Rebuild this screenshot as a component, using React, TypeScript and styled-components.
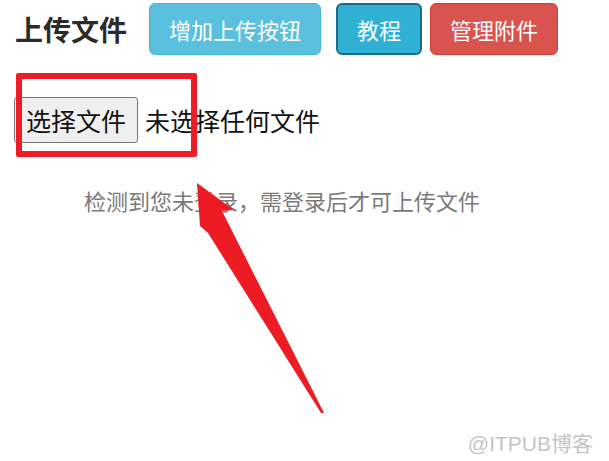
import styled, { createGlobalStyle } from "styled-components";

const GlobalStyle = createGlobalStyle`
  html, body {
    margin: 0;
    padding: 0;
    background: #ffffff;
    font-family: "Noto Sans CJK SC", "Noto Sans", sans-serif;
  }
`;

const Page = styled.div`
  position: relative;
  width: 609px;
  height: 461px;
  padding: 3px 0 0 14px;
  box-sizing: border-box;
  overflow: hidden;
`;

const Header = styled.div`
  display: flex;
  align-items: center;
  height: 52px;
`;

const Title = styled.h2`
  margin: 0 22px 0 1px;
  font-size: 28px;
  line-height: 52px;
  font-weight: 700;
  color: #2b2b2b;
`;

type Variant = "info" | "active" | "danger";

const palette: Record<Variant, { bg: string; border: string }> = {
  info: { bg: "#5bc0de", border: "#46b8da" },
  active: { bg: "#31b0d5", border: "#1d6b82" },
  danger: { bg: "#d9534f", border: "#d43f3a" },
};

const Button = styled.button<{ $variant: Variant; $gap?: number }>`
  height: 52px;
  margin-left: ${(p) => p.$gap ?? 0}px;
  padding: 0 19px;
  border: ${(p) => (p.$variant === "active" ? 2 : 1)}px solid
    ${(p) => palette[p.$variant].border};
  border-radius: 6px;
  background: ${(p) => palette[p.$variant].bg};
  color: #ffffff;
  font-family: inherit;
  font-size: 22px;
  line-height: 1;
  cursor: pointer;
`;

const FileRow = styled.div`
  display: flex;
  align-items: center;
  gap: 7px;
  margin-top: 42px;
  height: 46px;
`;

const FileButton = styled.label`
  display: flex;
  align-items: center;
  justify-content: center;
  width: 124px;
  height: 46px;
  box-sizing: border-box;
  border: 1px solid #767676;
  border-radius: 3px;
  background: #efefef;
  color: #111111;
  font-size: 25px;
  cursor: pointer;
`;

const FileName = styled.span`
  font-size: 25px;
  color: #111111;
`;

const Notice = styled.p`
  margin: 41px 0 0 70px;
  font-size: 22px;
  line-height: 33px;
  color: #7a7a7a;
`;

const Highlight = styled.div`
  position: absolute;
  left: 16px;
  top: 73px;
  width: 181px;
  height: 84px;
  box-sizing: border-box;
  border: 6px solid #ee1c25;
  border-radius: 2px;
  pointer-events: none;
`;

const ArrowLayer = styled.svg`
  position: absolute;
  left: 0;
  top: 0;
  pointer-events: none;
`;

const Watermark = styled.span`
  position: absolute;
  right: 16px;
  top: 427px;
  font-family: "Liberation Sans", "Noto Sans CJK SC", sans-serif;
  font-size: 21px;
  color: #c4c4c4;
`;

const App = () => {
  return (
    <>
      <GlobalStyle />
      <Page>
        <Header>
          <Title>上传文件</Title>
          <Button $variant="info">增加上传按钮</Button>
          <Button $variant="active" $gap={15}>
            教程
          </Button>
          <Button $variant="danger" $gap={8}>
            管理附件
          </Button>
        </Header>
        <FileRow>
          <FileButton>选择文件</FileButton>
          <FileName>未选择任何文件</FileName>
        </FileRow>
        <Notice>检测到您未登录，需登录后才可上传文件</Notice>

        <Highlight />
        <ArrowLayer width="609" height="461" viewBox="0 0 609 461">
          <polygon
            points="197,183 234,210 222,211 324,413 321,413 208,233 200,226"
            fill="#ed1c24"
          />
        </ArrowLayer>
        <Watermark>@ITPUB博客</Watermark>
      </Page>
    </>
  );
};

export default App;
